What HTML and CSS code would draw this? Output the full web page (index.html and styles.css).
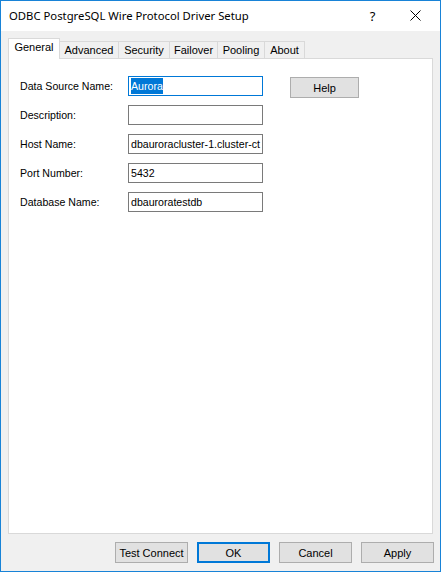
FILE: index.html
```html
<!DOCTYPE html>
<html>
<head>
<meta charset="utf-8">
<link rel="stylesheet" href="styles.css">
</head>
<body>
<div class="window">
  <div class="titlebar">
    <span class="title">ODBC PostgreSQL Wire Protocol Driver Setup</span>
    <span class="caption-help">?</span>
    <span class="caption-close">
      <svg width="11" height="11" viewBox="0 0 11 11"><path d="M0.5 0.5 L10.5 10.5 M10.5 0.5 L0.5 10.5" stroke="#000" stroke-width="1" fill="none"/></svg>
    </span>
  </div>
  <div class="client">
    <div class="tabs">
      <div class="tab tab-selected tab-general">General</div>
      <div class="tab tab-advanced">Advanced</div>
      <div class="tab tab-security">Security</div>
      <div class="tab tab-failover">Failover</div>
      <div class="tab tab-pooling">Pooling</div>
      <div class="tab tab-about">About</div>
    </div>
    <div class="panel">
      <div class="form">
        <label class="label">Data Source Name:</label>
        <div class="input input-focus"><span class="selected">Aurora</span></div>
        <label class="label">Description:</label>
        <div class="input"></div>
        <label class="label">Host Name:</label>
        <div class="input">dbauroracluster-1.cluster-ct</div>
        <label class="label">Port Number:</label>
        <div class="input">5432</div>
        <label class="label">Database Name:</label>
        <div class="input">dbauroratestdb</div>
      </div>
      <div class="button help-btn">Help</div>
    </div>
    <div class="buttons">
      <div class="button">Test Connect</div>
      <div class="button button-default">OK</div>
      <div class="button">Cancel</div>
      <div class="button">Apply</div>
    </div>
  </div>
</div>
</body>
</html>
```
FILE: styles.css
```css
html, body {
  margin: 0;
  padding: 0;
  background: #ffffff;
}
.window {
  width: 441px;
  height: 572px;
  box-sizing: border-box;
  border: 1px solid #1883d7;
  display: flex;
  flex-direction: column;
  font-family: "Liberation Sans", Arial, sans-serif;
  font-size: 10.6px;
  color: #000;
}
.titlebar {
  height: 30px;
  flex: none;
  background: #ffffff;
  display: flex;
  align-items: center;
  padding-left: 8px;
}
.title {
  flex: 1;
  font-family: "Noto Sans", "Open Sans", sans-serif;
  font-size: 11.3px;
  white-space: nowrap;
  padding-bottom: 1px;
}
.caption-help {
  font-family: "Noto Sans", "Open Sans", sans-serif;
  font-size: 13px;
  width: 46px;
  text-align: center;
  padding-bottom: 1px;
  padding-left: 3px;
  box-sizing: border-box;
}
.caption-close {
  width: 46px;
  display: flex;
  justify-content: center;
  align-items: center;
  padding-bottom: 1px;
  padding-right: 3px;
  box-sizing: border-box;
}
.caption-close svg {
  display: block;
}
.client {
  flex: 1;
  background: #f0f0f0;
  display: flex;
  flex-direction: column;
  padding: 7px 7px 8px 7px;
  min-height: 0;
}
.tabs {
  height: 20px;
  flex: none;
  display: flex;
  align-items: flex-end;
  position: relative;
  z-index: 1;
  font-size: 11px;
}
.tab {
  height: 17px;
  box-sizing: border-box;
  border: 1px solid #d9d9d9;
  border-bottom: none;
  margin-left: -1px;
  background: #f0f0f0;
  display: flex;
  align-items: center;
  justify-content: center;
  white-space: nowrap;
  padding-bottom: 1px;
}
.tab-selected {
  height: 21px;
  margin-bottom: -1px;
  margin-left: 0;
  background: #ffffff;
  padding-bottom: 4px;
  position: relative;
  z-index: 2;
}
.tab-general { width: 52px; }
.tab-advanced { width: 60px; margin-left: -1px; }
.tab-security { width: 52px; }
.tab-failover { width: 49px; }
.tab-pooling { width: 48px; }
.tab-about { width: 41px; }
.panel {
  flex: 1;
  background: #ffffff;
  border: 1px solid #d9d9d9;
  display: flex;
  align-items: flex-start;
  padding: 17px 0 0 11px;
  min-height: 0;
}
.form {
  display: grid;
  grid-template-columns: 108px 135px;
  row-gap: 9px;
  align-items: center;
}
.label {
  line-height: 20px;
  white-space: nowrap;
}
.input {
  height: 20px;
  box-sizing: border-box;
  border: 1px solid #7a7a7a;
  background: #ffffff;
  padding: 0 2px;
  line-height: 18px;
  white-space: nowrap;
  overflow: hidden;
}
.input-focus {
  border-color: #0078d7;
}
.selected {
  background: #0078d7;
  color: #ffffff;
  display: inline-block;
  line-height: 16px;
  vertical-align: top;
  margin-top: 1px;
}
.button {
  height: 21px;
  box-sizing: border-box;
  border: 1px solid #adadad;
  background: #e1e1e1;
  display: flex;
  align-items: center;
  justify-content: center;
  white-space: nowrap;
  font-size: 11px;
}
.help-btn {
  width: 69px;
  margin-left: 27px;
  margin-top: 1px;
}
.buttons {
  flex: none;
  display: flex;
  justify-content: flex-end;
  gap: 9px;
  margin-top: 8px;
  margin-right: -1px;
}
.buttons .button {
  width: 73px;
}
.button-default {
  border: 2px solid #0078d7;
}
```
